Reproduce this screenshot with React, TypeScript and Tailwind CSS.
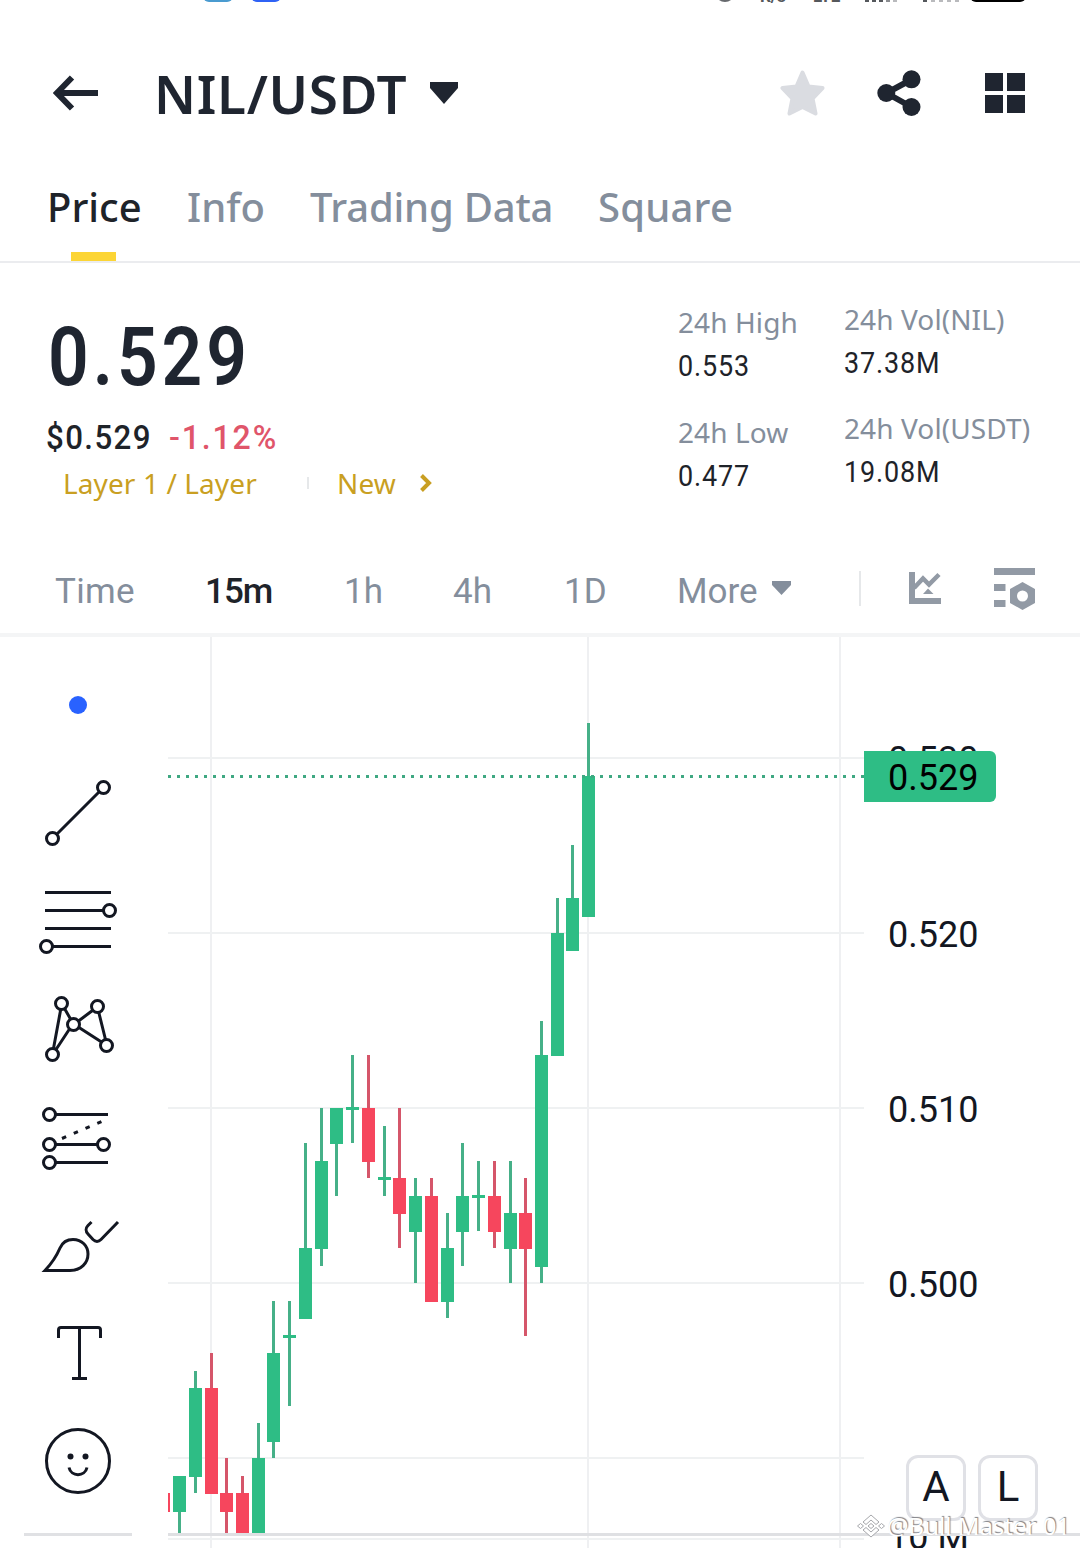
import type { ReactNode } from "react";

type Candle = {
  x: number;
  open: number;
  close: number;
  high: number;
  low: number;
  up: boolean;
};

const TABS = [
  { label: "Price", className: "w-[140px] text-[#1e2329]", active: true },
  { label: "Info", className: "w-[123px] text-[#848e9c]" },
  { label: "Trading Data", className: "w-[288px] tracking-[-0.2px] text-[#848e9c]" },
  { label: "Square", className: "tracking-[0.2px] text-[#848e9c]" },
];

const INTERVALS = [
  { label: "Time", className: "w-[150px] tracking-[0.3px]" },
  { label: "15m", className: "w-[139px] font-medium tracking-[-1px] text-[#1e2329]" },
  { label: "1h", className: "w-[109px]" },
  { label: "4h", className: "w-[111px]" },
  { label: "1D", className: "w-[113px]" },
  { label: "More", className: "w-[94px]" },
];

const AXIS_LABELS = ["0.530", "0.520", "0.510", "0.500"];
const GRID_ROWS = [758, 933, 1108, 1283, 1458, 1539];
const GRID_COLUMNS = [211, 588, 840];

// Body top/bottom and wick top/bottom in chart units
const CANDLES: Candle[] = [
  { x: 157, open: 1493, close: 1512, high: 1493, low: 1512, up: false },
  { x: 173, open: 1476, close: 1512, high: 1476, low: 1533, up: true },
  { x: 189, open: 1388, close: 1477, high: 1371, low: 1493, up: true },
  { x: 205, open: 1388, close: 1494, high: 1353, low: 1494, up: false },
  { x: 220, open: 1493, close: 1512, high: 1458, low: 1533, up: false },
  { x: 236, open: 1493, close: 1533, high: 1476, low: 1533, up: false },
  { x: 252, open: 1458, close: 1533, high: 1423, low: 1533, up: true },
  { x: 267, open: 1353, close: 1442, high: 1301, low: 1458, up: true },
  { x: 283, open: 1335, close: 1338, high: 1301, low: 1406, up: true },
  { x: 299, open: 1248, close: 1319, high: 1143, low: 1319, up: true },
  { x: 315, open: 1161, close: 1249, high: 1108, low: 1266, up: true },
  { x: 330, open: 1108, close: 1144, high: 1108, low: 1196, up: true },
  { x: 346, open: 1107, close: 1110, high: 1055, low: 1143, up: true },
  { x: 362, open: 1108, close: 1162, high: 1055, low: 1178, up: false },
  { x: 378, open: 1177, close: 1180, high: 1126, low: 1196, up: true },
  { x: 393, open: 1178, close: 1214, high: 1108, low: 1248, up: false },
  { x: 409, open: 1196, close: 1232, high: 1178, low: 1283, up: true },
  { x: 425, open: 1196, close: 1302, high: 1178, low: 1302, up: false },
  { x: 441, open: 1248, close: 1302, high: 1213, low: 1318, up: true },
  { x: 456, open: 1196, close: 1232, high: 1143, low: 1266, up: true },
  { x: 472, open: 1195, close: 1198, high: 1161, low: 1231, up: true },
  { x: 488, open: 1196, close: 1232, high: 1161, low: 1248, up: false },
  { x: 504, open: 1213, close: 1249, high: 1161, low: 1283, up: true },
  { x: 519, open: 1213, close: 1249, high: 1178, low: 1336, up: false },
  { x: 535, open: 1055, close: 1267, high: 1021, low: 1283, up: true },
  { x: 551, open: 933, close: 1056, high: 898, low: 1056, up: true },
  { x: 566, open: 898, close: 951, high: 845, low: 951, up: true },
  { x: 582, open: 776, close: 917, high: 723, low: 917, up: true },
];

function StatusBar() {
  return (
    <div className="relative h-1 overflow-hidden font-['Roboto',sans-serif] text-[17px] leading-none font-bold text-[#55585c]">
      <div className="absolute -top-5 left-[203px] h-[22px] w-[30px] rounded-md bg-[#4a9bd0]" />
      <div className="absolute -top-5 left-[251px] h-[22px] w-[30px] rounded-md bg-[#2f62f5]" />
      <div className="absolute -top-[18px] left-[715px] size-5 rounded-full border-[3px] border-[#66696d]" />
      <span className="absolute -top-3 left-[760px]">K/s</span>
      <span className="absolute -top-3 left-[813px]">LTE</span>
      <div className="absolute top-0 left-[865px] flex gap-[3px]">
        <i className="h-0.5 w-1 bg-[#55585c]" />
        <i className="h-0.5 w-1 bg-[#55585c]" />
        <i className="h-0.5 w-1 bg-[#55585c]" />
        <i className="h-0.5 w-1 bg-[#8b8d91]" />
        <i className="h-0.5 w-1 bg-[#b9babd]" />
      </div>
      <div className="absolute top-0 left-[923px] flex gap-1">
        <i className="h-0.5 w-1 bg-[#55585c]" />
        <i className="h-0.5 w-1 bg-[#b9babd]" />
        <i className="h-0.5 w-1 bg-[#b9babd]" />
        <i className="h-0.5 w-1 bg-[#b9babd]" />
        <i className="h-0.5 w-1 bg-[#b9babd]" />
      </div>
      <div className="absolute -top-5 left-[970px] h-[22px] w-[56px] rounded-md bg-black" />
    </div>
  );
}

function Header() {
  return (
    <header className="flex h-[178px] items-center pr-[55px] pl-[53px] text-[#1f2530]">
      <svg width="45" height="36" viewBox="0 0 45 36" fill="none" stroke="currentColor" strokeWidth="6">
        <path d="M45 18H5" />
        <path d="M19 2.5L4 18L19 33.5" />
      </svg>
      <h1 className="ml-[56px] w-[276px] font-['Noto_Sans',sans-serif] text-[53px] leading-none font-semibold tracking-[0.7px] whitespace-nowrap">
        NIL/USDT
      </h1>
      <svg width="28" height="22" viewBox="0 0 28 22" fill="currentColor">
        <path d="M0 0H28V6L14 22L0 6Z" />
      </svg>

      <div className="ml-auto flex items-center">
        <svg
          className="mr-[52px]"
          width="45"
          height="46"
          viewBox="0 0 45 46"
          fill="#dadce1"
          stroke="#dadce1"
          strokeWidth="4"
          strokeLinejoin="round"
        >
          <path d="M22.5 2.5L28.5 16.5L42.5 18L32.5 28.5L35.5 43.5L22.5 37L9.5 43.5L12.5 28.5L2.5 18L16.5 16.5Z" />
        </svg>
        <svg className="mr-[64px]" width="44" height="46" viewBox="0 0 44 46" fill="currentColor">
          <path d="M34.5 9.5L9.5 23L34.5 37" fill="none" stroke="currentColor" strokeWidth="6" />
          <circle cx="34.5" cy="9.3" r="9" />
          <circle cx="9.3" cy="23" r="9" />
          <circle cx="34.5" cy="37" r="9" />
        </svg>
        <div className="grid grid-cols-2 gap-1">
          <i className="size-[18px] bg-current" />
          <i className="size-[18px] bg-current" />
          <i className="size-[18px] bg-current" />
          <i className="size-[18px] bg-current" />
        </div>
      </div>
    </header>
  );
}

function Tabs() {
  return (
    <nav className="flex h-[81px] border-b-2 border-[#ebecef] pt-px pl-[47px] font-['Noto_Sans',sans-serif] text-[40px] leading-[48px] font-medium whitespace-nowrap">
      {TABS.map((tab) => (
        <div key={tab.label} className={tab.className}>
          {tab.label}
          {tab.active && <div className="mt-[21px] ml-6 h-[9px] w-[45px] bg-[#fcd535]" />}
        </div>
      ))}
    </nav>
  );
}

function Stat({ label, value }: { label: string; value: string }) {
  return (
    <div className="h-[86px] leading-[43px] whitespace-nowrap">
      <p className="font-['Noto_Sans',sans-serif] text-[28px] tracking-[0.1px] text-[#848e9c]">{label}</p>
      <p className="mt-px origin-left scale-x-[0.93] text-[29px] tracking-[0.9px] text-[#1e2329]">{value}</p>
    </div>
  );
}

function Ticker() {
  return (
    <section className="flex h-[284px] pl-12 font-['Roboto',sans-serif]">
      <div className="w-[630px] pt-[44px]">
        <p className="mt-px h-[100px] w-max origin-left scale-x-[0.88] text-[81px] leading-[100px] font-semibold tracking-[4.5px] text-[#1f2530]">
          0.529
        </p>
        <p className="-ml-0.5 mt-[5px] flex h-12 text-[34px] leading-[48px] font-medium text-[#1e2329]">
          <span className="w-[123px] origin-left scale-x-[0.92] tracking-[1.5px]">$0.529</span>
          <span className="origin-left scale-x-[0.94] tracking-[2px] text-[#e0556a]">-1.12%</span>
        </p>
        <div className="-mt-px flex h-[45px] items-center pl-[15px] font-['Noto_Sans',sans-serif] text-[28px] leading-none tracking-[0.1px] whitespace-nowrap text-[#c99f22]">
          <span className="w-[244px]">Layer 1 / Layer</span>
          <i className="mr-7 h-3 w-0.5 bg-[#e6e8ea]" />
          <span className="w-[83px]">New</span>
          <svg width="12" height="18" viewBox="0 0 12 18" fill="none" stroke="currentColor" strokeWidth="4">
            <path d="M1.5 1.5L9 9L1.5 16.5" />
          </svg>
        </div>
      </div>
      <div className="flex w-[166px] flex-col gap-6 pt-[38px]">
        <Stat label="24h High" value="0.553" />
        <Stat label="24h Low" value="0.477" />
      </div>
      <div className="flex flex-col gap-[23px] pt-[35px] tracking-[0.5px]">
        <Stat label="24h Vol(NIL)" value="37.38M" />
        <Stat label="24h Vol(USDT)" value="19.08M" />
      </div>
    </section>
  );
}

function IntervalBar() {
  return (
    <div className="flex h-[90px] items-center border-b-4 border-[#f4f5f6] pl-[55px] font-['Roboto',sans-serif] text-[35px] leading-none text-[#848e9c]">
      <div className="mt-0.5 flex">
        {INTERVALS.map((item) => (
          <span key={item.label} className={item.className}>
            {item.label}
          </span>
        ))}
      </div>
      <svg className="ml-px -mt-1" width="19" height="14" viewBox="0 0 19 14" fill="currentColor">
        <path d="M0 0H19V4L9.500 14L0 4Z" />
      </svg>
      <i className="-mt-1 mr-[48px] ml-[68px] h-[35px] w-0.5 bg-[#e6e8ea]" />
      <svg className="-mt-1" width="32" height="32" viewBox="0 0 32 32" fill="#929aa5">
        <path d="M0 0H6V26H32V32H0Z" />
        <path d="M5 16L14 6.500L20 12.500L30 2.500" fill="none" stroke="#929aa5" strokeWidth="4.500" />
        <path d="M14 22L19 16.500L24.500 22Z" />
      </svg>
      <svg className="-mt-0.5 ml-[53px]" width="41" height="43" viewBox="0 0 41 43" fill="#929aa5">
        <path d="M0 0H41V7H0Z" />
        <path d="M0 16H11.500V23H0Z" />
        <path d="M0 32H11.500V39H0Z" />
        <path
          fillRule="evenodd"
          d="M28.500 14L41 21V35L28.500 42L16 35V21ZM28.500 22.500A5.500 5.500 0 1 0 28.500 33.500A5.500 5.500 0 1 0 28.500 22.500Z"
        />
      </svg>
    </div>
  );
}

function Tool({ top, height, children }: { top: number; height: number; children: ReactNode }) {
  return (
    <svg
      width="132"
      height={height}
      viewBox={`0 ${top} 132 ${height}`}
      fill="none"
      stroke="#131722"
      strokeWidth="3"
    >
      {children}
    </svg>
  );
}

function DrawingTools() {
  return (
    <aside className="flex w-[168px] flex-col">
      <Tool top={637} height={123}>
        <circle cx="78" cy="705" r="9" fill="#2962ff" stroke="none" />
      </Tool>
      {/* Trend line */}
      <Tool top={760} height={110}>
        <path d="M57 834L99 792" />
        <circle cx="103.500" cy="787.500" r="6" />
        <circle cx="52.500" cy="838.500" r="6" />
      </Tool>
      {/* Fib retracement */}
      <Tool top={870} height={110}>
        <path d="M45 892.500H111M45 910.500H103M45 928.500H111M53 946.500H111" />
        <circle cx="109.500" cy="910.500" r="6" />
        <circle cx="46.500" cy="946.500" r="6" />
      </Tool>
      {/* XABCD pattern */}
      <Tool top={980} height={110}>
        <path d="M60.700 1009.500L53.500 1048.500M64.500 1008.500L70.500 1019M69.500 1029L56 1049.500M78.500 1021L92.500 1010.500M79 1027.500L101.500 1042M98.800 1012.500L105.500 1039.500" />
        <circle cx="61.500" cy="1003.500" r="6" />
        <circle cx="97.500" cy="1006.500" r="6" />
        <circle cx="73.500" cy="1024.500" r="6" />
        <circle cx="52.500" cy="1054.500" r="6" />
        <circle cx="106.500" cy="1045.500" r="6" />
      </Tool>
      {/* Long position */}
      <Tool top={1090} height={110}>
        <path d="M56 1114.500H108M56 1144.500H97M56 1162.500H108" />
        <path d="M62 1138.500L104 1120.500" strokeDasharray="4.500 8.300" />
        <circle cx="49.500" cy="1114.500" r="6" />
        <circle cx="49.500" cy="1144.500" r="6" />
        <circle cx="103.500" cy="1144.500" r="6" />
        <circle cx="49.500" cy="1162.500" r="6" />
      </Tool>
      {/* Brush */}
      <Tool top={1200} height={105}>
        <path d="M45 1270.500C54 1261 57 1255 60 1248C63 1241 68 1239.500 73 1239.500C82 1239.500 88 1246 88 1254C88 1263 81 1270.500 70 1270.500Z" />
        <path d="M91.500 1222L88 1225.500C85.500 1228 85.500 1231.500 88 1234L93 1239.500C95.500 1242 98.500 1242 101 1239.500L118 1222" />
      </Tool>
      {/* Text */}
      <Tool top={1305} height={105}>
        <path d="M58.500 1338V1330Q58.500 1327.500 61 1327.500H98Q100.500 1327.500 100.500 1330V1338M79.500 1327.500V1378M72 1378.500H87" />
      </Tool>
      {/* Emoji */}
      <Tool top={1410} height={123}>
        <circle cx="78" cy="1461" r="31.500" />
        <circle cx="70.500" cy="1456.500" r="3" fill="#131722" stroke="none" />
        <circle cx="85.500" cy="1456.500" r="3" fill="#131722" stroke="none" />
        <path d="M69 1467.500C71 1477 85 1477 87 1467.500" />
      </Tool>
      <div className="ml-6 h-[3px] w-[108px] bg-[#e0e1e4]" />
    </aside>
  );
}

function CandleChart() {
  return (
    <svg width="696" height="911" viewBox="168 637 696 911" shapeRendering="crispEdges">
      {GRID_COLUMNS.map((x) => (
        <rect key={x} x={x - 1} y="637" width="2" height="911" fill="#eff0f2" />
      ))}
      {GRID_ROWS.map((y) => (
        <rect key={y} x="168" y={y - 1} width="696" height="2" fill="#eff1f2" />
      ))}
      <rect x="168" y="1533" width="696" height="3" fill="#dfe0e3" />
      {CANDLES.map((c) => (
        <g key={c.x}>
          <rect x={c.x + 5} y={c.high} width="3" height={c.low - c.high} fill={c.up ? "#46b088" : "#d5566a"} />
          <rect x={c.x} y={c.open} width="13" height={c.close - c.open} fill={c.up ? "#2ebd85" : "#f6465d"} />
        </g>
      ))}
      {/* Last price */}
      <path d="M168 776.500H864" stroke="#3fa882" strokeWidth="3" strokeDasharray="3 6" />
    </svg>
  );
}

function PriceAxis() {
  return (
    <div className="relative flex-1 font-['Roboto',sans-serif] text-[36px] leading-none text-[#131722]">
      <div className="h-[896px] overflow-hidden pt-[35px] pl-6">
        {AXIS_LABELS.map((label) => (
          <div key={label} className="flex h-[175px] items-center">
            {label}
          </div>
        ))}
      </div>
      <div className="h-[3px] bg-[#dfe0e3]" />
      <div className="h-3 overflow-hidden pl-6">
        <p className="-mt-[17px]">10 M</p>
      </div>

      <div className="absolute top-[114px] left-0 flex h-[51px] w-[132px] items-center rounded-r-md bg-[#2ebd85] pt-0.5 pl-6 text-black">
        0.529
      </div>
      <div className="absolute top-[818px] left-[42px] flex gap-3 text-[42px]">
        <button className="h-[66px] w-[60px] rounded-xl border-[3px] border-[#e0e1e6] bg-white pb-[3px]">A</button>
        <button className="h-[66px] w-[60px] rounded-xl border-[3px] border-[#e0e1e6] bg-white pb-[3px]">L</button>
      </div>
      <div className="absolute top-[877px] -left-[7px] flex items-center gap-1 whitespace-nowrap text-white">
        {/* Diamond logo */}
        <svg width="28" height="24" viewBox="0 0 28 24" fill="white" stroke="#a6a7ab" strokeWidth="1">
          <path d="M14 1L22 8L19 10.500L14 6L9 10.500L6 8Z" />
          <path d="M14 23L22 16L19 13.500L14 18L9 13.500L6 16Z" />
          <path d="M3.500 9.500L6.500 12L3.500 14.500L0.500 12ZM24.500 9.500L27.500 12L24.500 14.500L21.500 12ZM14 9.500L17 12L14 14.500L11 12Z" />
        </svg>
        <span className="-ml-0.5 font-['Noto_Sans',sans-serif] text-[24px] [text-shadow:1px_-1px_1px_#808186]">
          @Bull Master 01
        </span>
      </div>
    </div>
  );
}

export default function App() {
  return (
    <main className="h-[1548px] w-[1080px] overflow-hidden bg-white">
      <StatusBar />
      <Header />
      <Tabs />
      <Ticker />
      <IntervalBar />
      <div className="flex h-[911px]">
        <DrawingTools />
        <CandleChart />
        <PriceAxis />
      </div>
    </main>
  );
}
